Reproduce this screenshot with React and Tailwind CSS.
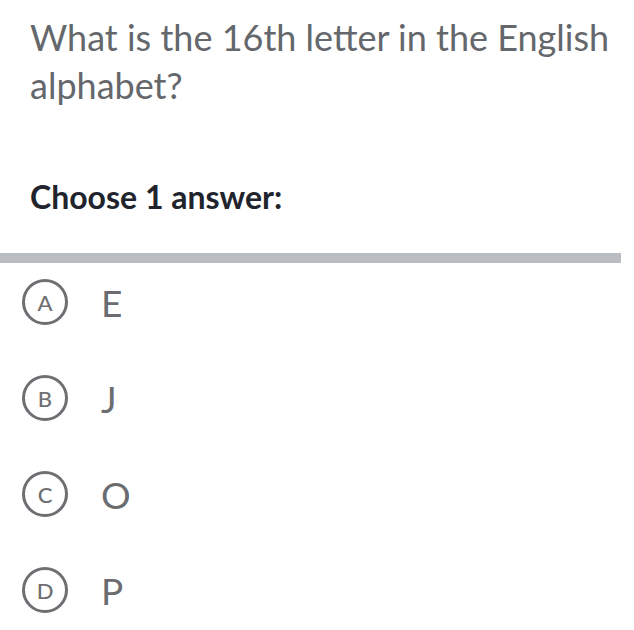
import React from 'react';

const choices = [
  { letter: 'A', text: 'E' },
  { letter: 'B', text: 'J' },
  { letter: 'C', text: 'O' },
  { letter: 'D', text: 'P' },
];

export default function App() {
  return (
    <div className="w-[634px] h-[630px] overflow-hidden bg-white" style={{ fontFamily: 'Lato, "Open Sans", sans-serif' }}>
      <div className="pl-[30px] pr-[20px] pt-[13px]">
        <p className="text-[36px] leading-[48px] text-[#64676b]">
          What is the 16th letter in the English alphabet?
        </p>
        <p className="mt-[70px] text-[32px] leading-[36px] font-bold text-[#21242c]">Choose 1 answer:</p>
      </div>

      <div className="mt-[38px] h-[10px] w-[621px] bg-[#babec2]" />

      <ul className="flex flex-col gap-[50px] pt-[16px] pl-[22px]">
        {choices.map((c) => (
          <li key={c.letter} className="flex items-center gap-[33px]">
            <span className="flex h-[46px] w-[46px] items-center justify-center rounded-full border-[3px] border-[#6f6f73] text-[22px] font-medium text-[#6f6f73]">
              {c.letter}
            </span>
            <span className="text-[37px] leading-none text-[#6b6c70]">{c.text}</span>
          </li>
        ))}
      </ul>
    </div>
  );
}
